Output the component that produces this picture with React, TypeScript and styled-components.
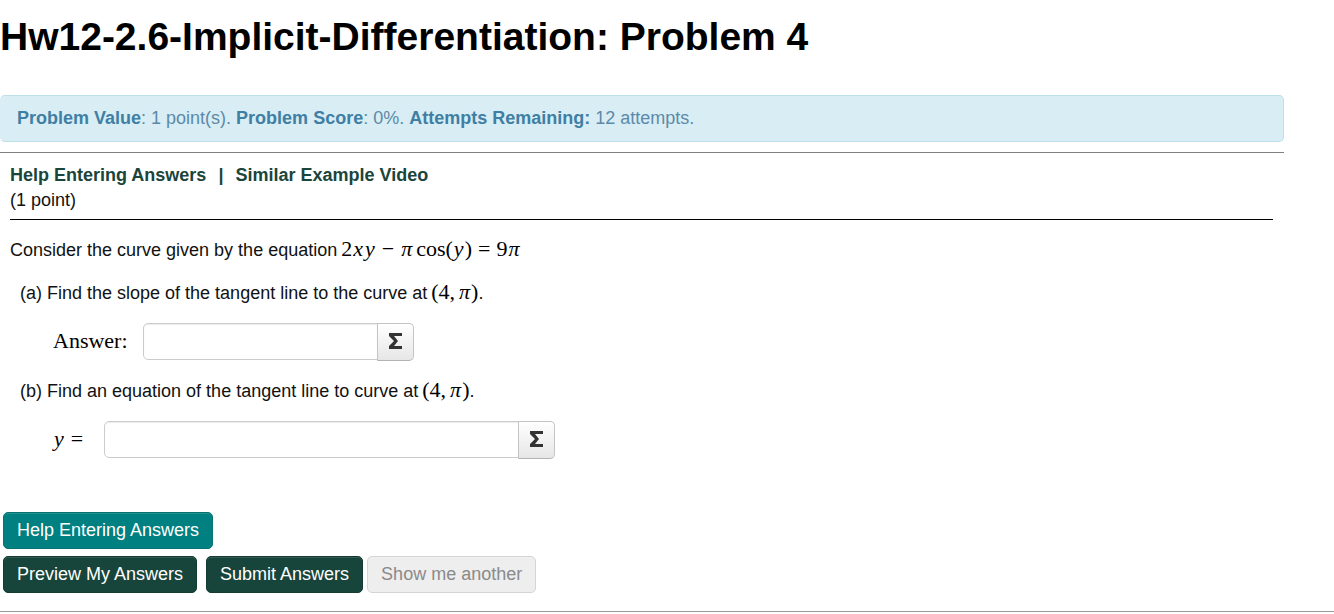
import React from "react";
import styled, { createGlobalStyle } from "styled-components";

const GlobalStyle = createGlobalStyle`
  *, *::before, *::after { box-sizing: border-box; }
  body {
    margin: 0;
    background: #fff;
    color: #111;
    font-family: "Liberation Sans", Arial, Helvetica, sans-serif;
    font-size: 18px;
    line-height: 25px;
  }
  button, input { font: inherit; }
`;

const Page = styled.main`
  padding: 12px 50px 0 0;
`;

const Title = styled.h1`
  margin: 0 0 33px;
  font-size: 39px;
  line-height: 50px;
  font-weight: 700;
  color: #000;
`;

const ScoreAlert = styled.div`
  padding: 10px 16px;
  border: 1px solid #bce0e8;
  border-left-color: #d9edf7;
  border-radius: 5px;
  background: #d9edf5;
  color: #5c8aa8;
  strong { color: #3f7fa3; }
`;

const Rule = styled.hr<{ $color: string }>`
  margin: 0;
  border: 0;
  border-top: 1px solid ${(p) => p.$color};
`;

const Problem = styled.section`
  margin-top: 10px;
`;

const ProblemBody = styled.div`
  padding: 10px 11px 0 10px;
`;

const HelpLinks = styled.nav`
  display: flex;
  gap: 12px;
  font-weight: 700;
  color: #1a453b;
`;

const HelpLink = styled.a`
  color: inherit;
  text-decoration: none;
`;

const Points = styled.p`
  margin: 0 0 6px;
`;

const Statement = styled.p<{ $indent?: boolean }>`
  display: flex;
  align-items: baseline;
  margin: 16px 0 0;
  padding-left: ${(p) => (p.$indent ? 10 : 0)}px;
`;

const Math = styled.span`
  display: inline-flex;
  align-items: baseline;
  margin-left: 4px;
  font-family: "Liberation Serif", "Times New Roman", serif;
  font-size: 22px;
  line-height: 25px;
  color: #000;
`;

const Variable = styled.i`
  padding: 0 1px;
`;

const Operator = styled.span`
  margin: 0 6px;
`;

const Punctuation = styled.span`
  margin-right: 3px;
`;

const AnswerRow = styled.div`
  display: flex;
  align-items: center;
  gap: 15px;
  margin-top: 17px;
  padding-left: 43px;
`;

const AnswerLabel = styled.label`
  display: flex;
  padding-bottom: 4px;
  font-family: "Liberation Serif", "Times New Roman", serif;
  font-size: 22px;
  line-height: 25px;
  color: #000;
`;

const InputGroup = styled.div`
  display: flex;
`;

const AnswerInput = styled.input<{ $width: number }>`
  width: ${(p) => p.$width}px;
  height: 37px;
  padding: 5px 7px;
  border: 1px solid #ccc;
  border-radius: 5px 0 0 5px;
  box-shadow: inset 0 1px 1px rgba(0, 0, 0, 0.08);
  background: #fff;
  outline: none;
`;

const SigmaButton = styled.button`
  display: flex;
  align-items: center;
  justify-content: center;
  width: 37px;
  height: 38px;
  margin-left: -1px;
  padding: 0 0 2px;
  border: 1px solid #c4c4c4;
  border-bottom-color: #b3b3b3;
  border-radius: 0 5px 5px 0;
  background: linear-gradient(#fff, #e6e6e6);
  color: #333;
`;

const Actions = styled.div`
  display: flex;
  flex-direction: column;
  gap: 7px;
  margin: 53px 0 18px;
  padding-left: 3px;
`;

const ActionRow = styled.div`
  display: flex;
  gap: 4px;
`;

const ActionButton = styled.button<{ $tone: "teal" | "dark" | "muted"; $after?: number }>`
  height: 37px;
  margin-right: ${(p) => p.$after ?? 0}px;
  padding: 0 13px;
  border: 1px solid
    ${(p) => ({ teal: "#087372", dark: "#143b31", muted: "#d5d5d5" })[p.$tone]};
  border-radius: 5px;
  background: ${(p) => ({ teal: "#008080", dark: "#18453b", muted: "#eee" })[p.$tone]};
  box-shadow: inset 0 1px 0 rgba(255, 255, 255, 0.12);
  color: ${(p) => (p.$tone === "muted" ? "#8a8a8a" : "#fff")};
  line-height: 25px;
  white-space: nowrap;
`;

const SigmaIcon = () => (
  <svg width="15" height="18" viewBox="0 0 15 18" aria-hidden="true">
    <path d="M1 1H14V4H6L10 9L6 14H14V17H1V14L6 9L1 4Z" fill="currentColor" />
  </svg>
);

const Point = () => (
  <Math>
    (4<Punctuation>,</Punctuation>
    <Variable>π</Variable>)
  </Math>
);

export default function App() {
  return (
    <>
      <GlobalStyle />
      <Page>
        <Title>Hw12-2.6-Implicit-Differentiation: Problem 4</Title>
        <ScoreAlert>
          <strong>Problem Value</strong>: 1 point(s). <strong>Problem Score</strong>: 0%.{" "}
          <strong>Attempts Remaining:</strong> 12 attempts.
        </ScoreAlert>
        <Problem>
          <Rule $color="#808080" />
          <ProblemBody>
            <HelpLinks>
              <HelpLink href="#help">Help Entering Answers</HelpLink>
              <span>|</span>
              <HelpLink href="#video">Similar Example Video</HelpLink>
            </HelpLinks>
            <Points>(1 point)</Points>
            <Rule $color="#000" />
            <Statement>
              Consider the curve given by the equation
              <Math>
                2<Variable>x</Variable>
                <Variable>y</Variable>
                <Operator>−</Operator>
                <Variable>π</Variable>
                <Punctuation />
                cos(<Variable>y</Variable>)<Operator>=</Operator>9<Variable>π</Variable>
              </Math>
            </Statement>
            <Statement $indent>
              (a) Find the slope of the tangent line to the curve at
              <Point />.
            </Statement>
            <AnswerRow>
              <AnswerLabel htmlFor="slope">Answer:</AnswerLabel>
              <InputGroup>
                <AnswerInput id="slope" type="text" $width={235} />
                <SigmaButton type="button" aria-label="Equation editor">
                  <SigmaIcon />
                </SigmaButton>
              </InputGroup>
            </AnswerRow>
            <Statement $indent>
              (b) Find an equation of the tangent line to curve at
              <Point />.
            </Statement>
            <AnswerRow>
              <AnswerLabel htmlFor="tangent">
                <Variable>y</Variable>
                <Operator>=</Operator>
              </AnswerLabel>
              <InputGroup>
                <AnswerInput id="tangent" type="text" $width={415} />
                <SigmaButton type="button" aria-label="Equation editor">
                  <SigmaIcon />
                </SigmaButton>
              </InputGroup>
            </AnswerRow>
          </ProblemBody>
        </Problem>
        <Actions>
          <ActionRow>
            <ActionButton type="button" $tone="teal">Help Entering Answers</ActionButton>
          </ActionRow>
          <ActionRow>
            <ActionButton type="button" $tone="dark" $after={5}>Preview My Answers</ActionButton>
            <ActionButton type="submit" $tone="dark">Submit Answers</ActionButton>
            <ActionButton type="button" $tone="muted" disabled>Show me another</ActionButton>
          </ActionRow>
        </Actions>
      </Page>
      <Rule $color="#999" />
    </>
  );
}
